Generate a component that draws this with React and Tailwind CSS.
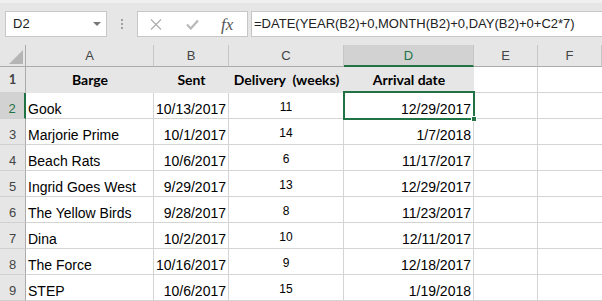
import React from "react";

const cols = [
  { key: "A", w: "w-[128px]" },
  { key: "B", w: "w-[75px]" },
  { key: "C", w: "w-[115px]" },
  { key: "D", w: "w-[130px]" },
  { key: "E", w: "w-[64px]" },
  { key: "F", w: "flex-1" },
];

const rows = [
  ["Gook", "10/13/2017", "11", "12/29/2017"],
  ["Marjorie Prime", "10/1/2017", "14", "1/7/2018"],
  ["Beach Rats", "10/6/2017", "6", "11/17/2017"],
  ["Ingrid Goes West", "9/29/2017", "13", "12/29/2017"],
  ["The Yellow Birds", "9/28/2017", "8", "11/23/2017"],
  ["Dina", "10/2/2017", "10", "12/11/2017"],
  ["The Force", "10/16/2017", "9", "12/18/2017"],
  ["STEP", "10/6/2017", "15", "1/19/2018"],
];

const RowHead = ({ n, active, center }) => (
  <div
    className={
      "w-[26px] h-[26px] shrink-0 flex justify-center leading-none text-[13px] border-b border-[#d0d0d0] " +
      (center ? "items-center " : "items-end pb-[3px] ") +
      (active
        ? "bg-[#d2d2d2] text-[#217346] border-r-2 border-r-[#217346]"
        : "bg-[#e6e6e6] text-[#444] border-r border-r-[#ababab]")
    }
  >
    {n}
  </div>
);

export default function App() {
  return (
    <div className="relative w-[602px] h-[301px] overflow-hidden bg-white font-['Liberation_Sans',Arial,sans-serif] text-[14px] text-black">
      {/* formula bar */}
      <div className="h-[45px] bg-[#e6e6e6] border-t-[3px] border-[#f0f0f0] flex items-start pt-[8px]">
        <div className="ml-[5px] w-[102px] h-[26px] shrink-0 bg-white border border-[#c6c6c6] flex items-center justify-between pl-[7px] pr-[5px]">
          <span className="text-[13px] text-[#222]">D2</span>
          <svg width="8" height="4" viewBox="0 0 8 4">
            <path d="M0 0 L8 0 L4 4 Z" fill="#777" />
          </svg>
        </div>
        <div className="w-[30px] h-[26px] shrink-0 flex flex-col items-center justify-center gap-[2px]">
          <span className="w-[2px] h-[2px] bg-[#a0a0a0]" />
          <span className="w-[2px] h-[2px] bg-[#a0a0a0]" />
          <span className="w-[2px] h-[2px] bg-[#a0a0a0]" />
        </div>
        <div className="w-[111px] h-[26px] shrink-0 bg-white border border-[#c6c6c6] flex items-center">
          <svg className="ml-[12px] shrink-0" width="12" height="11" viewBox="0 0 12 11">
            <path d="M1 0.5 L11 10.5 M11 0.5 L1 10.5" stroke="#b0b0b0" strokeWidth="1.3" />
          </svg>
          <svg className="ml-[24px] shrink-0" width="13" height="11" viewBox="0 0 13 11">
            <path d="M1 5.5 L4.8 9.5 L12 1.5" stroke="#b8b8b8" strokeWidth="2.2" fill="none" />
          </svg>
          <span className="ml-[22px] font-['Liberation_Serif',serif] italic text-[17px] text-[#555] leading-none">
            fx
          </span>
        </div>
        <div className="ml-[3px] flex-1 min-w-0 overflow-hidden whitespace-nowrap h-[26px] bg-white border-y border-l border-[#c6c6c6] flex items-center pl-[2px] text-[13px] text-[#222]">
          =DATE(YEAR(B2)+0,MONTH(B2)+0,DAY(B2)+0+C2*7)
        </div>
      </div>

      {/* column headers */}
      <div className="flex h-[22px]">
        <div className="w-[26px] h-[22px] shrink-0 bg-[#e6e6e6] border-r border-b border-[#ababab] flex items-end justify-end p-[2px]">
          <svg width="14" height="14" viewBox="0 0 14 14">
            <path d="M0 14 L14 14 L14 0 Z" fill="#b5b5b5" />
          </svg>
        </div>
        {cols.map((c) => (
          <div
            key={c.key}
            className={
              c.w +
              " h-[22px] shrink-0 flex items-center justify-center leading-none text-[13px] border-r border-[#c6c6c6] " +
              (c.key === "D"
                ? "bg-[#d2d2d2] text-[#217346] border-b-2 border-b-[#217346]"
                : "bg-[#e6e6e6] text-[#444] border-b border-b-[#ababab]")
            }
          >
            {c.key}
          </div>
        ))}
      </div>

      {/* row 1 */}
      <div className="flex font-['Lato',sans-serif] font-bold text-[14px] leading-none">
        <RowHead n={1} center />
        <div className="w-[128px] h-[26px] shrink-0 bg-[#e7e6e6] flex items-center justify-center">Barge</div>
        <div className="w-[75px] h-[26px] shrink-0 bg-[#e7e6e6] flex items-center justify-center">Sent</div>
        <div className="w-[115px] h-[26px] shrink-0 bg-[#e7e6e6] flex items-center justify-center whitespace-pre">
          Delivery  (weeks)
        </div>
        <div className="w-[130px] h-[26px] shrink-0 bg-[#e7e6e6] flex items-center justify-center">Arrival date</div>
        <div className="w-[64px] h-[26px] shrink-0 border-r border-b border-[#d4d4d4]" />
        <div className="flex-1 h-[26px] border-b border-[#d4d4d4]" />
      </div>

      {rows.map((r, i) => (
        <div key={i} className="flex leading-none">
          <RowHead n={i + 2} active={i === 0} />
          <div className="w-[128px] h-[26px] shrink-0 border-r border-b border-[#d4d4d4] flex items-end pl-[2px] pb-[2px]">{r[0]}</div>
          <div className="w-[75px] h-[26px] shrink-0 border-r border-b border-[#d4d4d4] flex items-end justify-end pr-[2px] pb-[2px]">{r[1]}</div>
          <div className="w-[115px] h-[26px] shrink-0 border-r border-b border-[#d4d4d4] flex items-end justify-center pb-[5px] text-[12px]">{r[2]}</div>
          <div className="w-[130px] h-[26px] shrink-0 border-r border-b border-[#d4d4d4] flex items-end justify-end pr-[2px] pb-[2px]">{r[3]}</div>
          <div className="w-[64px] h-[26px] shrink-0 border-r border-b border-[#d4d4d4]" />
          <div className="flex-1 h-[26px] border-b border-[#d4d4d4]" />
        </div>
      ))}

      {/* active cell D2 */}
      <div className="absolute left-[343px] top-[91px] w-[132px] h-[29px] border-2 border-[#217346]" />
      <div className="absolute left-[471px] top-[116px] w-[6px] h-[6px] bg-[#217346] border border-white" />
    </div>
  );
}
